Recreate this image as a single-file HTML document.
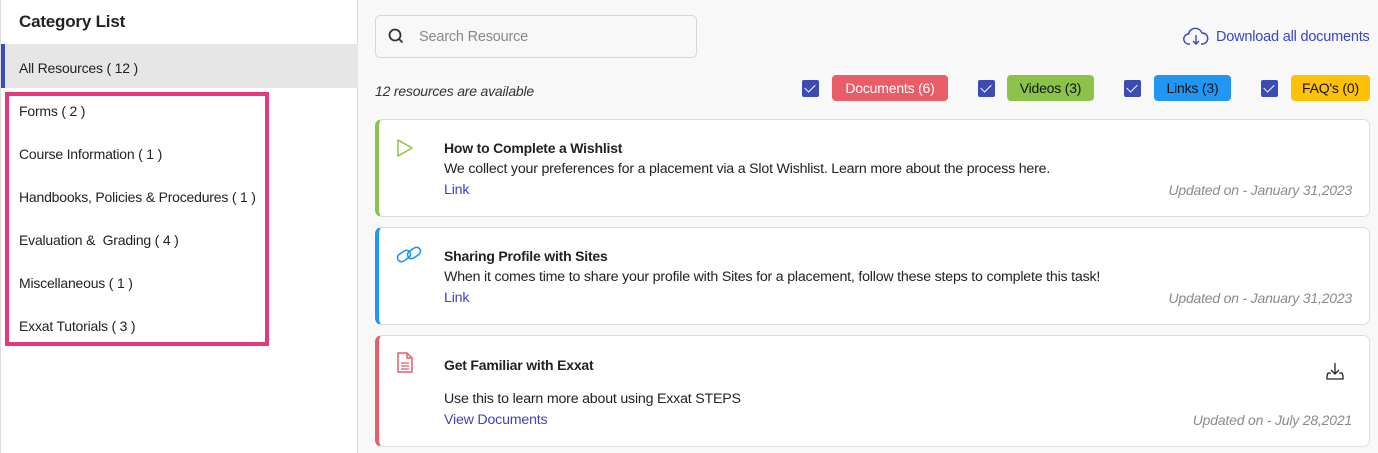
<!DOCTYPE html>
<html><head><meta charset="utf-8"><style>
*{box-sizing:border-box;margin:0;padding:0}
body{width:1378px;height:453px;overflow:hidden;background:#f8f8f8;font-family:"Liberation Sans",sans-serif;color:#222;position:relative;letter-spacing:-0.2px}
.a{position:absolute;white-space:nowrap}
#side{position:absolute;left:0;top:0;width:358px;height:453px;background:#fff;border-right:1px solid #ddd;border-left:1px solid #ddd}
.cat{position:absolute;left:18px;font-size:14px;color:#222}
.card{position:absolute;left:375px;width:995px;background:#fff;border:1px solid #ddd;border-radius:7px;border-left:4px solid}
.t{font-weight:bold;font-size:14px;color:#222}
.d{font-size:14.2px;color:#222}
.l{font-size:14.2px;color:#3a45c0}
.u{font-size:14px;font-style:italic;color:#8a8a8a}
.cb{position:absolute;top:80px;width:17px;height:17px;background:#3b4db5;border-radius:2px}
.cb:after{content:"";position:absolute;left:5px;top:2px;width:5px;height:9px;border:solid #fff;border-width:0 1.5px 1.5px 0;transform:rotate(45deg)}
.tag{position:absolute;top:75px;height:26px;border-radius:4px;font-size:14px;text-align:center;line-height:26px}
</style></head><body>
<div id="side">
<div class="a" style="left:18px;top:12px;font-size:17px;font-weight:bold">Category List</div>
<div style="position:absolute;left:0;top:44px;width:357px;height:44px;background:#e6e6e6;border-left:4px solid #3b4db5"></div>
<div class="cat a" style="top:60px">All Resources ( 12 )</div>
<div style="position:absolute;left:4px;top:92px;width:264px;height:254px;border:4px solid #e23a7c"></div>
<div class="cat a" style="top:103px">Forms ( 2 )</div>
<div class="cat a" style="top:146px">Course Information ( 1 )</div>
<div class="cat a" style="top:189px">Handbooks, Policies &amp; Procedures ( 1 )</div>
<div class="cat a" style="top:232px">Evaluation &amp;&nbsp; Grading ( 4 )</div>
<div class="cat a" style="top:275px">Miscellaneous ( 1 )</div>
<div class="cat a" style="top:318px">Exxat Tutorials ( 3 )</div>
</div>
<div style="position:absolute;left:375px;top:15px;width:322px;height:43px;background:#f8f8f8;border:1px solid #d6d6d6;border-radius:5px"></div>
<svg class="a" style="left:387px;top:27px" width="18" height="18" viewBox="0 0 18 18"><circle cx="8" cy="8" r="5.5" fill="none" stroke="#333" stroke-width="1.8"/><path d="M12 12l3.5 3.5" stroke="#333" stroke-width="1.8"/></svg>
<div class="a" style="left:419px;top:29px;font-size:14.5px;color:#888">Search Resource</div>
<svg class="a" style="left:1183px;top:27px" width="26" height="20" viewBox="0 0 26 20"><path d="M7 17H6a5 5 0 0 1-.5-10A7 7 0 0 1 19 6a5.5 5.5 0 0 1 .5 11H18" fill="none" stroke="#3a45c0" stroke-width="1.4"/><path d="M13 8v9M10 14l3 3 3-3" fill="none" stroke="#3a45c0" stroke-width="1.4"/></svg>
<div class="a" style="left:1216px;top:29px;font-size:14.5px;color:#3a45c0">Download all documents</div>
<div class="a" style="left:375px;top:83px;font-size:14px;font-style:italic;color:#333">12 resources are available</div>
<div class="cb" style="left:802px"></div>
<div class="tag" style="left:832px;width:116px;background:#e85d68;color:#fff">Documents (6)</div>
<div class="cb" style="left:978px"></div>
<div class="tag" style="left:1007px;width:87px;background:#8bc34a;color:#111">Videos (3)</div>
<div class="cb" style="left:1124px"></div>
<div class="tag" style="left:1154px;width:77px;background:#2196f3;color:#111">Links (3)</div>
<div class="cb" style="left:1261px"></div>
<div class="tag" style="left:1291px;width:79px;background:#ffc107;color:#111">FAQ's (0)</div>

<div class="card" style="top:119px;height:98px;border-left-color:#8bc34a"></div>
<svg class="a" style="left:396px;top:138px" width="18" height="20" viewBox="0 0 18 20"><path d="M2 2l14 8-14 8z" fill="none" stroke="#8bc34a" stroke-width="1.5" stroke-linejoin="round"/></svg>
<div class="a t" style="left:444px;top:140px">How to Complete a Wishlist</div>
<div class="a d" style="left:444px;top:161px">We collect your preferences for a placement via a Slot Wishlist. Learn more about the process here.</div>
<div class="a l" style="left:444px;top:182px">Link</div>
<div class="a u" style="right:26px;top:182px">Updated on - January 31,2023</div>

<div class="card" style="top:227px;height:98px;border-left-color:#2196f3"></div>
<svg class="a" style="left:396px;top:245px" width="28" height="20" viewBox="0 0 28 20"><g fill="none" stroke="#2196f3" stroke-width="1.6"><rect x="1" y="7" width="14" height="8" rx="4" transform="rotate(-35 8 11)"/><rect x="11" y="4" width="14" height="8" rx="4" transform="rotate(-35 18 8)"/></g></svg>
<div class="a t" style="left:444px;top:248px">Sharing Profile with Sites</div>
<div class="a d" style="left:444px;top:269px">When it comes time to share your profile with Sites for a placement, follow these steps to complete this task!</div>
<div class="a l" style="left:444px;top:290px">Link</div>
<div class="a u" style="right:26px;top:290px">Updated on - January 31,2023</div>

<div class="card" style="top:335px;height:112px;border-left-color:#e85d68"></div>
<svg class="a" style="left:396px;top:352px" width="18" height="22" viewBox="0 0 18 22"><path d="M2 1h9l5 5v14H2z M11 1v5h5" fill="none" stroke="#e85d68" stroke-width="1.5" stroke-linejoin="round"/><path d="M5 11h8M5 14h8M5 17h8" stroke="#e85d68" stroke-width="1.3"/></svg>
<div class="a t" style="left:444px;top:357px">Get Familiar with Exxat</div>
<svg class="a" style="left:1325px;top:362px" width="20" height="20" viewBox="0 0 20 20"><path d="M10 1v11M6 8l4 4 4-4M6 11H3l-1 3v3h16v-3l-1-3h-3" fill="none" stroke="#222" stroke-width="1.3"/></svg>
<div class="a d" style="left:444px;top:391px">Use this to learn more about using Exxat STEPS</div>
<div class="a l" style="left:444px;top:412px">View Documents</div>
<div class="a u" style="right:26px;top:412px">Updated on - July 28,2021</div>
</body></html>
